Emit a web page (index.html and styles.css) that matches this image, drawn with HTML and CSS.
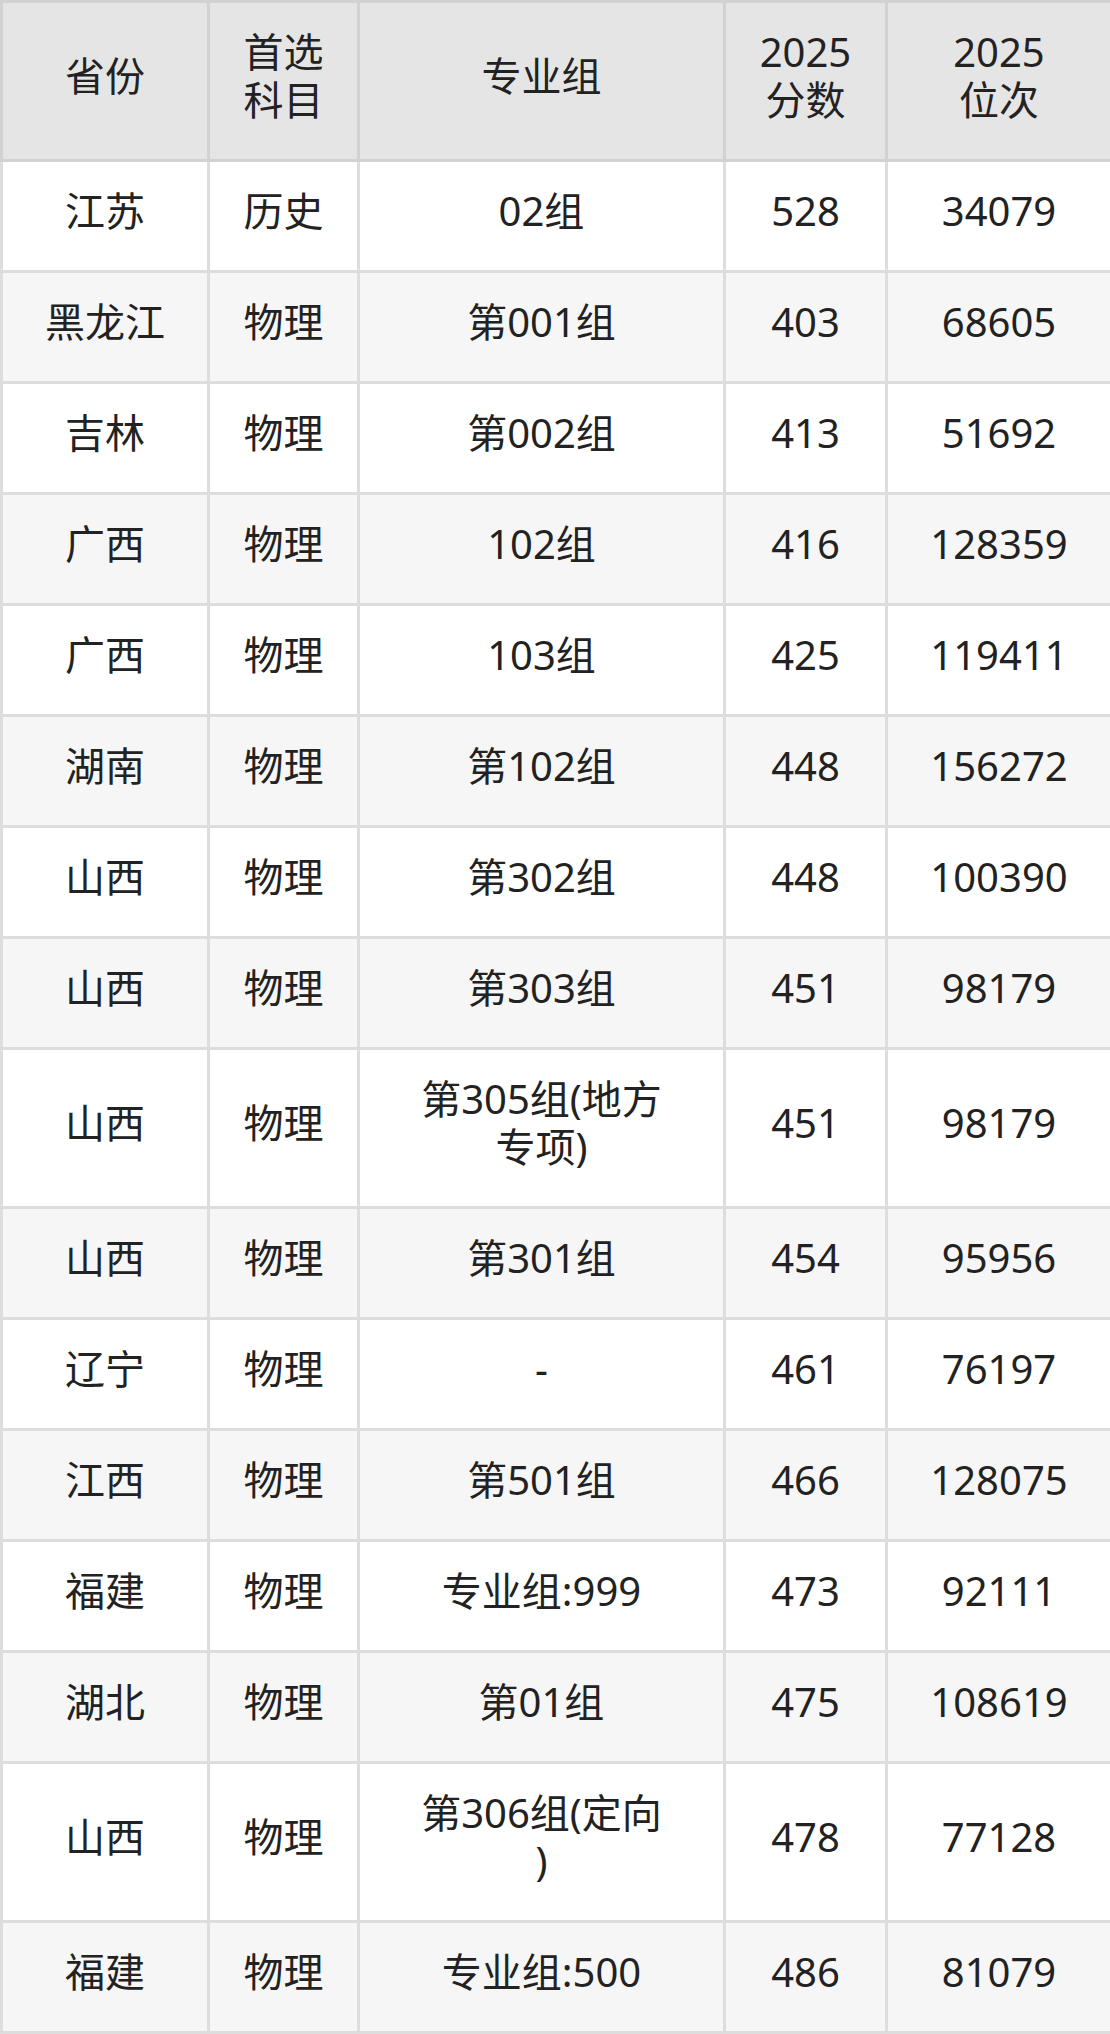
FILE: index.html
```html
<!DOCTYPE html>
<html lang="zh-CN">
<head>
<meta charset="utf-8">
<title>分数线</title>
<link rel="stylesheet" href="styles.css">
</head>
<body>
<table class="score-table">
  <colgroup>
    <col class="c-prov">
    <col class="c-subj">
    <col class="c-group">
    <col class="c-score">
    <col class="c-rank">
  </colgroup>
  <thead>
    <tr>
      <th class="prov">省份</th>
      <th class="subj">首选科目</th>
      <th class="group">专业组</th>
      <th class="score">2025分数</th>
      <th class="rank">2025位次</th>
    </tr>
  </thead>
  <tbody>
    <tr><td class="prov">江苏</td><td class="subj">历史</td><td class="group">02组</td><td class="score">528</td><td class="rank">34079</td></tr>
    <tr><td class="prov">黑龙江</td><td class="subj">物理</td><td class="group">第001组</td><td class="score">403</td><td class="rank">68605</td></tr>
    <tr><td class="prov">吉林</td><td class="subj">物理</td><td class="group">第002组</td><td class="score">413</td><td class="rank">51692</td></tr>
    <tr><td class="prov">广西</td><td class="subj">物理</td><td class="group">102组</td><td class="score">416</td><td class="rank">128359</td></tr>
    <tr><td class="prov">广西</td><td class="subj">物理</td><td class="group">103组</td><td class="score">425</td><td class="rank">119411</td></tr>
    <tr><td class="prov">湖南</td><td class="subj">物理</td><td class="group">第102组</td><td class="score">448</td><td class="rank">156272</td></tr>
    <tr><td class="prov">山西</td><td class="subj">物理</td><td class="group">第302组</td><td class="score">448</td><td class="rank">100390</td></tr>
    <tr><td class="prov">山西</td><td class="subj">物理</td><td class="group">第303组</td><td class="score">451</td><td class="rank">98179</td></tr>
    <tr><td class="prov">山西</td><td class="subj">物理</td><td class="group">第305组(地方专项)</td><td class="score">451</td><td class="rank">98179</td></tr>
    <tr><td class="prov">山西</td><td class="subj">物理</td><td class="group">第301组</td><td class="score">454</td><td class="rank">95956</td></tr>
    <tr><td class="prov">辽宁</td><td class="subj">物理</td><td class="group">-</td><td class="score">461</td><td class="rank">76197</td></tr>
    <tr><td class="prov">江西</td><td class="subj">物理</td><td class="group">第501组</td><td class="score">466</td><td class="rank">128075</td></tr>
    <tr><td class="prov">福建</td><td class="subj">物理</td><td class="group">专业组:999</td><td class="score">473</td><td class="rank">92111</td></tr>
    <tr><td class="prov">湖北</td><td class="subj">物理</td><td class="group">第01组</td><td class="score">475</td><td class="rank">108619</td></tr>
    <tr><td class="prov">山西</td><td class="subj">物理</td><td class="group">第306组(定向)</td><td class="score">478</td><td class="rank">77128</td></tr>
    <tr><td class="prov">福建</td><td class="subj">物理</td><td class="group">专业组:500</td><td class="score">486</td><td class="rank">81079</td></tr>
  </tbody>
</table>
</body>
</html>
```

FILE: styles.css
```css
html, body {
  margin: 0;
  padding: 0;
  background: #ffffff;
}

body {
  font-family: "Noto Sans", "Noto Sans CJK SC", sans-serif;
  color: #222222;
}

.score-table {
  width: 1110px;
  border-collapse: collapse;
  table-layout: fixed;
  font-size: 40px;
  line-height: 48px;
}

.c-prov { width: 207px; }
.c-subj { width: 150px; }
.c-group { width: 366px; }
.c-score { width: 162px; }
.c-rank { width: 225px; }

.score-table th,
.score-table td {
  border: 3px solid #dddddd;
  padding: 25px 16px 35px;
  text-align: center;
  vertical-align: middle;
  font-weight: normal;
}

.score-table th {
  background: #e5e5e5;
  border-color: #d2d2d2;
}

.score-table tbody tr:nth-child(odd) td {
  background: #ffffff;
}

.score-table tbody tr:nth-child(even) td {
  background: #f6f6f6;
}

.score-table .subj { padding-left: 30px; padding-right: 30px; }
.score-table .group {
  padding-left: 59px;
  padding-right: 59px;
  line-break: anywhere;
}
.score-table th.rank { padding-left: 50px; padding-right: 50px; }
```
